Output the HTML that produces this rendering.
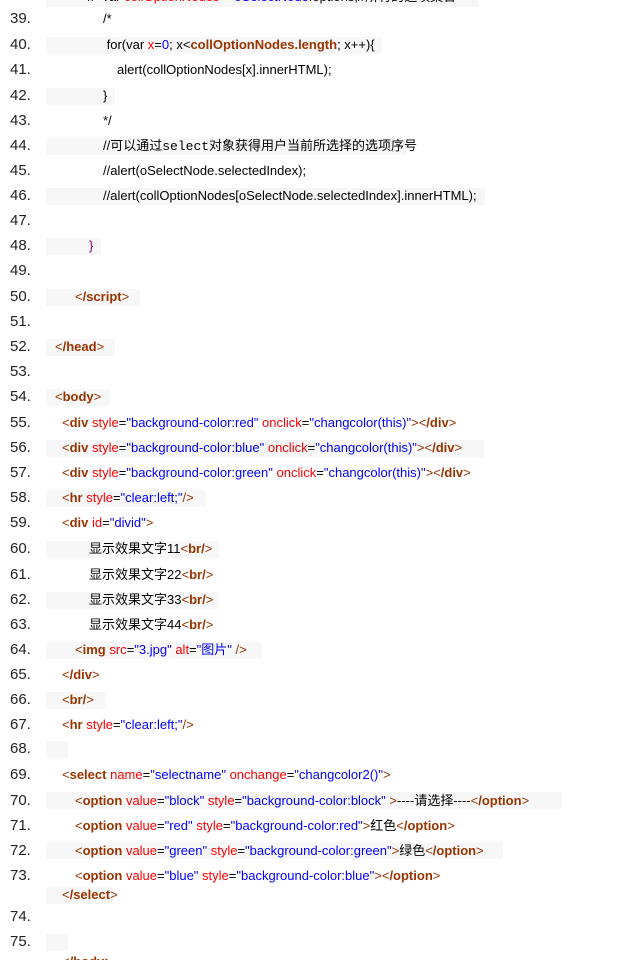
<!DOCTYPE html>
<html><head><meta charset="utf-8"><style>
html,body{margin:0;padding:0;background:#fff;width:634px;height:960px;overflow:hidden;position:relative;font-family:"Liberation Sans","Noto Sans CJK SC",sans-serif;}
.n{position:absolute;left:10px;font-size:15px;color:#222;line-height:18px;}
.h{position:absolute;left:46px;height:17px;background:#f7f7f7;}
.c{position:absolute;font-size:13px;line-height:18px;color:#000;white-space:pre;}
.t{color:#993300}.t b{font-weight:bold}
.a{color:#ff0000}.v{color:#0000ff}.p{color:#800080}
</style></head><body>
<!-- highlights -->
<div class="h" style="top:-1px;width:432px;height:8px"></div>
<div class="h" style="top:37px;width:336px"></div>
<div class="h" style="top:88px;width:69px"></div>
<div class="h" style="top:138px;width:361px"></div>
<div class="h" style="top:188px;width:439px"></div>
<div class="h" style="top:238px;width:55px"></div>
<div class="h" style="top:289px;width:94px"></div>
<div class="h" style="top:339px;width:69px"></div>
<div class="h" style="top:389px;width:64px"></div>
<div class="h" style="top:440px;width:438px"></div>
<div class="h" style="top:490px;width:160px"></div>
<div class="h" style="top:541px;width:173px"></div>
<div class="h" style="top:592px;width:173px"></div>
<div class="h" style="top:642px;width:216px"></div>
<div class="h" style="top:692px;width:59px"></div>
<div class="h" style="top:741px;width:22px"></div>
<div class="h" style="top:792px;width:516px"></div>
<div class="h" style="top:842px;width:457px"></div>
<div class="h" style="top:887px;width:68px"></div>
<div class="h" style="top:934px;width:22px"></div>

<div class="c" style="top:-12px;left:88px">//  var <span class="a">collOptionNodes</span> = <span class="v">oSelectNode</span>.options;//所有的选项集合</div>

<div class="n" style="top:10px">39.</div><div class="c" style="top:10px;left:103px">/*</div>
<div class="n" style="top:36px">40.</div><div class="c" style="top:36px;left:103px"> for(var <span class="a">x</span>=<span class="v">0</span>; x&lt;<b class="t">collOptionNodes.length</b>; x++){</div>
<div class="n" style="top:61px">41.</div><div class="c" style="top:61px;left:117px">alert(collOptionNodes[x].innerHTML);</div>
<div class="n" style="top:87px">42.</div><div class="c" style="top:87px;left:103px">}</div>
<div class="n" style="top:112px">43.</div><div class="c" style="top:112px;left:103px">*/</div>
<div class="n" style="top:137px">44.</div><div class="c" style="top:137px;left:103px">//可以通过<span style="font-family:'Liberation Mono',monospace">select</span>对象获得用户当前所选择的选项序号</div>
<div class="n" style="top:162px">45.</div><div class="c" style="top:162px;left:103px">//alert(oSelectNode.selectedIndex);</div>
<div class="n" style="top:187px">46.</div><div class="c" style="top:187px;left:103px">//alert(collOptionNodes[oSelectNode.selectedIndex].innerHTML);</div>
<div class="n" style="top:212px">47.</div>
<div class="n" style="top:237px">48.</div><div class="c p" style="top:237px;left:89px">}</div>
<div class="n" style="top:262px">49.</div>
<div class="n" style="top:288px">50.</div><div class="c t" style="top:288px;left:75px">&lt;<b>/script</b>&gt;</div>
<div class="n" style="top:313px">51.</div>
<div class="n" style="top:338px">52.</div><div class="c t" style="top:338px;left:55px">&lt;<b>/head</b>&gt;</div>
<div class="n" style="top:363px">53.</div>
<div class="n" style="top:388px">54.</div><div class="c t" style="top:388px;left:55px">&lt;<b>body</b>&gt;</div>
<div class="n" style="top:414px">55.</div><div class="c" style="top:414px;left:62px"><span class="t">&lt;<b>div</b></span> <span class="a">style</span>=<span class="v">"background-color:red"</span> <span class="a">onclick</span>=<span class="v">"changcolor(this)"</span><span class="t">&gt;&lt;<b>/div</b>&gt;</span></div>
<div class="n" style="top:439px">56.</div><div class="c" style="top:439px;left:62px"><span class="t">&lt;<b>div</b></span> <span class="a">style</span>=<span class="v">"background-color:blue"</span> <span class="a">onclick</span>=<span class="v">"changcolor(this)"</span><span class="t">&gt;&lt;<b>/div</b>&gt;</span></div>
<div class="n" style="top:464px">57.</div><div class="c" style="top:464px;left:62px"><span class="t">&lt;<b>div</b></span> <span class="a">style</span>=<span class="v">"background-color:green"</span> <span class="a">onclick</span>=<span class="v">"changcolor(this)"</span><span class="t">&gt;&lt;<b>/div</b>&gt;</span></div>
<div class="n" style="top:489px">58.</div><div class="c" style="top:489px;left:62px"><span class="t">&lt;<b>hr</b></span> <span class="a">style</span>=<span class="v">"clear:left;"</span><span class="t">/&gt;</span></div>
<div class="n" style="top:514px">59.</div><div class="c" style="top:514px;left:62px"><span class="t">&lt;<b>div</b></span> <span class="a">id</span>=<span class="v">"divid"</span><span class="t">&gt;</span></div>
<div class="n" style="top:540px">60.</div><div class="c" style="top:540px;left:89px">显示效果文字11<span class="t">&lt;<b>br/</b>&gt;</span></div>
<div class="n" style="top:566px">61.</div><div class="c" style="top:566px;left:89px">显示效果文字22<span class="t">&lt;<b>br/</b>&gt;</span></div>
<div class="n" style="top:591px">62.</div><div class="c" style="top:591px;left:89px">显示效果文字33<span class="t">&lt;<b>br/</b>&gt;</span></div>
<div class="n" style="top:616px">63.</div><div class="c" style="top:616px;left:89px">显示效果文字44<span class="t">&lt;<b>br/</b>&gt;</span></div>
<div class="n" style="top:641px">64.</div><div class="c" style="top:641px;left:75px"><span class="t">&lt;<b>img</b></span> <span class="a">src</span>=<span class="v">"3.jpg"</span> <span class="a">alt</span>=<span class="v">"图片"</span> <span class="t">/&gt;</span></div>
<div class="n" style="top:666px">65.</div><div class="c t" style="top:666px;left:62px">&lt;<b>/div</b>&gt;</div>
<div class="n" style="top:691px">66.</div><div class="c t" style="top:691px;left:62px">&lt;<b>br/</b>&gt;</div>
<div class="n" style="top:716px">67.</div><div class="c" style="top:716px;left:62px"><span class="t">&lt;<b>hr</b></span> <span class="a">style</span>=<span class="v">"clear:left;"</span><span class="t">/&gt;</span></div>
<div class="n" style="top:740px">68.</div>
<div class="n" style="top:766px">69.</div><div class="c" style="top:766px;left:62px"><span class="t">&lt;<b>select</b></span> <span class="a">name</span>=<span class="v">"selectname"</span> <span class="a">onchange</span>=<span class="v">"changcolor2()"</span><span class="t">&gt;</span></div>
<div class="n" style="top:792px">70.</div><div class="c" style="top:792px;left:75px"><span class="t">&lt;<b>option</b></span> <span class="a">value</span>=<span class="v">"block"</span> <span class="a">style</span>=<span class="v">"background-color:block"</span> <span class="t">&gt;</span>----请选择----<span class="t">&lt;<b>/option</b>&gt;</span></div>
<div class="n" style="top:817px">71.</div><div class="c" style="top:817px;left:75px"><span class="t">&lt;<b>option</b></span> <span class="a">value</span>=<span class="v">"red"</span> <span class="a">style</span>=<span class="v">"background-color:red"</span><span class="t">&gt;</span>红色<span class="t">&lt;<b>/option</b>&gt;</span></div>
<div class="n" style="top:842px">72.</div><div class="c" style="top:842px;left:75px"><span class="t">&lt;<b>option</b></span> <span class="a">value</span>=<span class="v">"green"</span> <span class="a">style</span>=<span class="v">"background-color:green"</span><span class="t">&gt;</span>绿色<span class="t">&lt;<b>/option</b>&gt;</span></div>
<div class="n" style="top:867px">73.</div><div class="c" style="top:867px;left:75px"><span class="t">&lt;<b>option</b></span> <span class="a">value</span>=<span class="v">"blue"</span> <span class="a">style</span>=<span class="v">"background-color:blue"</span><span class="t">&gt;&lt;<b>/option</b>&gt;</span></div>
<div class="c t" style="top:886px;left:62px">&lt;<b>/select</b>&gt;</div>
<div class="n" style="top:908px">74.</div>
<div class="n" style="top:933px">75.</div>
<div class="c t" style="top:953px;left:62px">&lt;<b>/body</b>&gt;</div>
</body></html>
